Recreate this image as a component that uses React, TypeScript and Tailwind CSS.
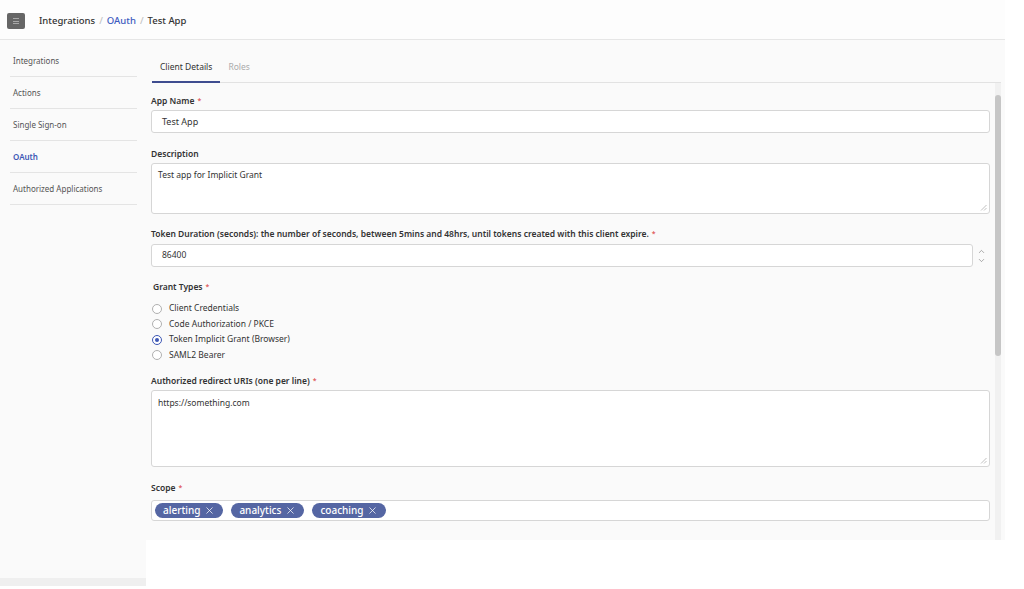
import { ChevronDown, ChevronUp, X } from 'lucide-react'

const navItems = [
  { label: 'Integrations', active: false },
  { label: 'Actions', active: false },
  { label: 'Single Sign-on', active: false },
  { label: 'OAuth', active: true },
  { label: 'Authorized Applications', active: false },
]

const grantTypes = [
  { label: 'Client Credentials', checked: false },
  { label: 'Code Authorization / PKCE', checked: false },
  { label: 'Token Implicit Grant (Browser)', checked: true },
  { label: 'SAML2 Bearer', checked: false },
]

const scopes = ['alerting', 'analytics', 'coaching']

function Label({ text, required, className = '' }: { text: string; required?: boolean; className?: string }) {
  return (
    <div className={`h-[12px] leading-[12px] text-[8.5px] font-semibold text-[#333] ${className}`}>
      {text}
      {required && <span className="ml-[3px] text-[7px] align-top text-[#e05a5a]">*</span>}
    </div>
  )
}

function Radio({ checked }: { checked: boolean }) {
  return (
    <span
      className={`w-[10px] h-[10px] rounded-full border flex items-center justify-center bg-white ${
        checked ? 'border-[#3d57b5]' : 'border-[#b0b0b0]'
      }`}
    >
      {checked && <span className="w-[4px] h-[4px] rounded-full bg-[#3d57b5]" />}
    </span>
  )
}

function ResizeGrip() {
  return (
    <svg width="7" height="7" viewBox="0 0 7 7" className="absolute right-[2px] bottom-[2px]">
      <path d="M6.5 1 L1 6.5 M6.5 4 L4 6.5" stroke="#b0b0b0" strokeWidth="0.8" />
    </svg>
  )
}

export default function App() {
  return (
    <div className="w-[1024px] h-[589px] bg-white overflow-hidden font-['Noto_Sans',sans-serif]">
      <div className="w-[1005px] h-full flex flex-col">
        {/* Header */}
        <header className="h-[40px] shrink-0 flex items-center gap-[14px] pl-[7px] pt-[3px] bg-[#fdfdfd] border-b border-[#e6e6e6]">
          <button className="w-[18px] h-[16px] rounded-[2px] bg-[#666] flex flex-col items-center justify-center gap-[1.5px]">
            <span className="w-[6px] h-px bg-[#a8a8a8]" />
            <span className="w-[6px] h-px bg-[#a8a8a8]" />
            <span className="w-[6px] h-px bg-[#a8a8a8]" />
          </button>
          <nav className="flex items-center gap-[4px] text-[9.5px] font-medium text-[#333]">
            <span>Integrations</span>
            <span className="text-[#c4c4c4]">/</span>
            <span className="text-[#3d5bc0]">OAuth</span>
            <span className="text-[#c4c4c4]">/</span>
            <span>Test App</span>
          </nav>
        </header>

        <div className="flex-1 flex min-h-0">
          {/* Sidebar */}
          <aside className="w-[146px] shrink-0 flex flex-col">
            <div className="flex-1 bg-[#fafafa] pt-[5px] pl-[10px] pr-[9px]">
              {navItems.map((item) => (
                <div
                  key={item.label}
                  className={`h-[32px] flex items-center pl-[3px] border-b border-[#e4e4e4] text-[8px] ${
                    item.active ? 'text-[#3d57b5] font-semibold' : 'text-[#555]'
                  }`}
                >
                  {item.label}
                </div>
              ))}
            </div>
            <div className="h-[8px] bg-[#efefef]" />
            <div className="h-[3px] bg-white" />
          </aside>

          {/* Main */}
          <main className="flex-1 flex flex-col bg-white">
            <div className="bg-[#fafafa] pt-[13px] pl-[6px] pr-[4px]">
              <div className="h-[30px] flex border-b border-[#e2e2e2]">
                <div className="px-[8px] flex items-center text-[8.5px] text-[#333] border-b-2 border-[#3e4c8f] -mb-px">
                  Client Details
                </div>
                <div className="px-[8px] flex items-center text-[8.5px] text-[#aaa]">Roles</div>
              </div>
            </div>

            <div className="h-[457px] flex bg-[#fafafa] pl-[5px]">
              <form className="flex-1 pt-[12px] pr-[5px] flex flex-col">
                <Label text="App Name" required />
                <div className="mt-[3px] h-[23px] bg-white border border-[#d6d6d6] rounded-[3px] flex items-center pl-[10px] text-[9px] text-[#333]">
                  Test App
                </div>

                <Label text="Description" className="mt-[15px]" />
                <div className="relative mt-[3px] h-[51px] bg-white border border-[#d6d6d6] rounded-[3px] pl-[6px] pt-[5px] text-[8.5px] text-[#333]">
                  Test app for Implicit Grant
                  <ResizeGrip />
                </div>

                <Label
                  text="Token Duration (seconds): the number of seconds, between 5mins and 48hrs, until tokens created with this client expire."
                  required
                  className="mt-[14px]"
                />
                <div className="mt-[4px] flex items-center">
                  <div className="flex-1 h-[23px] bg-white border border-[#d6d6d6] rounded-[3px] flex items-center pl-[10px] text-[8.5px] text-[#333]">
                    86400
                  </div>
                  <div className="w-[17px] flex flex-col items-center text-[#777]">
                    <ChevronUp size={9} strokeWidth={1.6} />
                    <ChevronDown size={9} strokeWidth={1.6} />
                  </div>
                </div>

                <Label text="Grant Types" required className="mt-[14px] pl-[2px]" />
                <div className="mt-[8px] flex flex-col">
                  {grantTypes.map((g) => (
                    <label key={g.label} className="h-[15.5px] flex items-center gap-[7px] pl-[1px] text-[8.5px] text-[#333]">
                      <Radio checked={g.checked} />
                      {g.label}
                    </label>
                  ))}
                </div>

                <Label text="Authorized redirect URIs (one per line)" required className="mt-[12px]" />
                <div className="relative mt-[3px] h-[77px] bg-white border border-[#d6d6d6] rounded-[3px] pl-[6px] pt-[6px] text-[8.5px] text-[#333]">
                  https://something.com
                  <ResizeGrip />
                </div>

                <Label text="Scope" required className="mt-[15px]" />
                <div className="mt-[6px] h-[21px] bg-white border border-[#d6d6d6] rounded-[3px] flex items-center gap-[8px] pl-[3px]">
                  {scopes.map((s) => (
                    <span
                      key={s}
                      className="h-[15px] flex items-center gap-[4px] px-[8px] rounded-full bg-[#5566a3] text-white text-[10px] font-medium"
                    >
                      {s}
                      <X size={11} strokeWidth={1.6} />
                    </span>
                  ))}
                </div>
              </form>

              <div className="w-[6px] bg-[#f1f1f1] pt-[12px]">
                <div className="h-[261px] rounded-full bg-[#c6c6c6]" />
              </div>
              <div className="w-[4px]" />
            </div>
          </main>
        </div>
      </div>
    </div>
  )
}
